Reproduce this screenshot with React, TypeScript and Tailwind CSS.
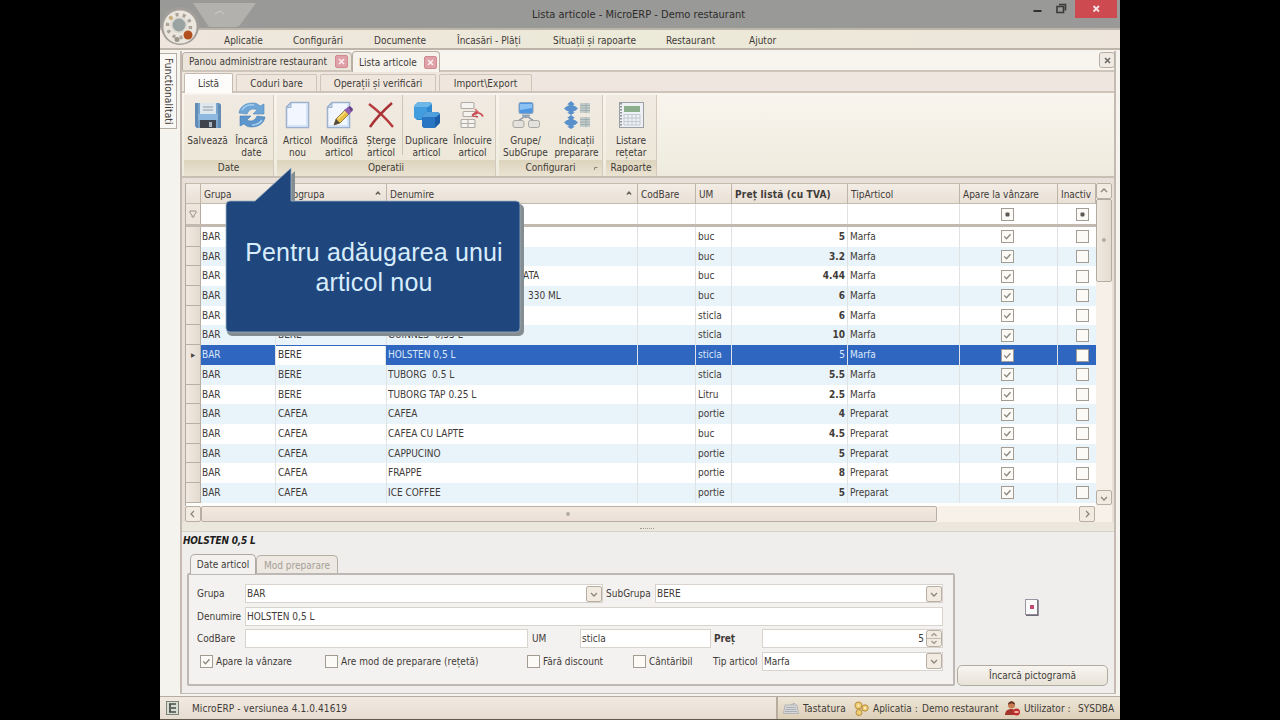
import React from "react";
import clsx from "clsx";

type Row = {
    grupa: string,
    subgrupa?: string,
    denumire?: string,
    um: string,
    pret: string,
    tip: string,
    indent?: string
}

const rows: Row[] = [
    { grupa: "BAR", um: "buc", pret: "5", tip: "Marfa" },
    { grupa: "BAR", um: "buc", pret: "3.2", tip: "Marfa" },
    { grupa: "BAR", denumire: "ATA", um: "buc", pret: "4.44", tip: "Marfa", indent: "pl-[136px]" },
    { grupa: "BAR", denumire: "330 ML", um: "buc", pret: "6", tip: "Marfa", indent: "pl-[141px]" },
    { grupa: "BAR", um: "sticla", pret: "6", tip: "Marfa" },
    { grupa: "BAR", subgrupa: "BERE", denumire: "GUINNES  0,33 L", um: "sticla", pret: "10", tip: "Marfa" },
    { grupa: "BAR", subgrupa: "BERE", denumire: "HOLSTEN 0,5 L", um: "sticla", pret: "5", tip: "Marfa" },
    { grupa: "BAR", subgrupa: "BERE", denumire: "TUBORG  0.5 L", um: "sticla", pret: "5.5", tip: "Marfa" },
    { grupa: "BAR", subgrupa: "BERE", denumire: "TUBORG TAP 0.25 L", um: "Litru", pret: "2.5", tip: "Marfa" },
    { grupa: "BAR", subgrupa: "CAFEA", denumire: "CAFEA", um: "portie", pret: "4", tip: "Preparat" },
    { grupa: "BAR", subgrupa: "CAFEA", denumire: "CAFEA CU LAPTE", um: "buc", pret: "4.5", tip: "Preparat" },
    { grupa: "BAR", subgrupa: "CAFEA", denumire: "CAPPUCINO", um: "portie", pret: "5", tip: "Preparat" },
    { grupa: "BAR", subgrupa: "CAFEA", denumire: "FRAPPE", um: "portie", pret: "8", tip: "Preparat" },
    { grupa: "BAR", subgrupa: "CAFEA", denumire: "ICE COFFEE", um: "portie", pret: "5", tip: "Preparat" },
]

const selected = 6

const cols = "grid grid-cols-[15px_75px_111px_251px_58px_36px_116px_112px_98px_38px]"

function Check({ on, dot, className }: { on?: boolean, dot?: boolean, className?: string }) {
    return (
        <svg className={clsx("h-[13px] w-[13px] shrink-0", className)} viewBox="0 0 13 13">
            <rect x="0.5" y="0.5" width="12" height="12" fill="#fbfaf6" stroke="#a39c93" />
            {on && <path d="M3.2 6.4l2.3 2.4 4-4.6" fill="none" stroke="#8a847c" strokeWidth="1.3" />}
            {dot && <rect x="4.500" y="4.500" width="4" height="4" rx="1" fill="#5c5852" />}
        </svg>
    )
}

function Arrow({ dir, className }: { dir: "up" | "down" | "left" | "right", className?: string }) {
    const d = {
        up: "M2 6l3-3 3 3",
        down: "M2 4l3 3 3-3",
        left: "M6 2L3 5l3 3",
        right: "M4 2l3 3-3 3",
    }[dir]
    return (
        <span className={clsx("flex shrink-0 items-center justify-center rounded-[2px] border border-[#b8aea3] bg-[#f1ebe2]", className)}>
            <svg className="h-[10px] w-[10px]" viewBox="0 0 10 10">
                <path d={d} fill="none" stroke="#8d857d" strokeWidth="1.3" />
            </svg>
        </span>
    )
}

function CloseMark() {
    return (
        <svg className="h-[13px] w-[13px] shrink-0" viewBox="0 0 13 13">
            <rect x="0.5" y="0.5" width="12" height="12" rx="1.5" fill="#e0a0a7" stroke="#cf8991" />
            <path d="M4 4l5 5M9 4l-5 5" stroke="#fbeef0" strokeWidth="1.6" />
        </svg>
    )
}

function SortMark() {
    return (
        <svg className="mt-[7px] h-[5px] w-[6px] shrink-0" viewBox="0 0 6 5">
            <path d="M0.800 3.500L3 1l2.200 2.500" fill="none" stroke="#69635c" strokeWidth="1.2" />
        </svg>
    )
}

/* ---------- ribbon icons, all on a 28x28 canvas ---------- */

function SaveIcon() {
    return (
        <svg className="h-7 w-7" viewBox="0 0 28 28">
            <path d="M1 2h24l2 2v23H3l-2-2z" fill="#7ba6cc" />
            <path d="M1 2h3v25H3l-2-2zM24 2h1l2 2v23h-3z" fill="#628bb5" />
            <rect x="6" y="2" width="16" height="11" fill="#dfe7ee" />
            <path d="M9 6h10M9 9h10" stroke="#a9b5c0" strokeWidth="1.4" />
            <rect x="4" y="13" width="20" height="6" fill="#8cb9dd" />
            <rect x="6" y="19" width="16" height="8" fill="#3f444d" />
            <rect x="15" y="21" width="3" height="5" fill="#a7b3bf" />
        </svg>
    )
}

function RefreshIcon() {
    return (
        <svg className="h-7 w-7" viewBox="0 0 28 28">
            <path d="M1 12C2 5 8 2 15 2c3 0 5 1 7 3l4-2v10H15l4-4c-4-2-8-1-10 4z" fill="#6fa6d6" stroke="#5089bd" strokeWidth="0.6" />
            <path d="M27 16c-1 7-7 10-14 10-3 0-5-1-7-3l-4 2V15h11l-4 4c4 2 8 1 10-4z" fill="#5c96cc" stroke="#4a80b5" strokeWidth="0.6" />
            <path d="M4 9c2-4 7-6 12-5M24 19c-2 3-6 5-10 5" fill="none" stroke="#a8d0ee" strokeWidth="1.4" />
        </svg>
    )
}

function Page() {
    return (
        <>
            <path d="M7 1.5h17.5v25h-22V6z" fill="#f1f6ff" stroke="#9db1ce" strokeWidth="1.5" />
            <path d="M2.5 6.5H7V2z" fill="#c5d7ee" stroke="#9db1ce" />
            <path d="M23 3v22H4" fill="none" stroke="#cddff5" strokeWidth="1.6" />
        </>
    )
}

function PageIcon() {
    return <svg className="h-7 w-7" viewBox="0 0 28 28"><Page /></svg>
}

function EditIcon() {
    return (
        <svg className="h-7 w-7" viewBox="0 0 28 28">
            <Page />
            <path d="M9 24l2-6L21 8l4 4-10 10z" fill="#e9bf3f" stroke="#7c6836" strokeWidth="0.8" />
            <path d="M9 24l2-6 4 4z" fill="#514a42" />
            <path d="M13 18l9-9" stroke="#f8df83" strokeWidth="1.6" />
            <path d="M19 9l4-3 4 4-3 4z" fill="#8d5fae" />
            <path d="M23 6l2-1 3 3-1 3z" fill="#653e8a" />
        </svg>
    )
}

function DeleteIcon() {
    return (
        <svg className="h-7 w-7" viewBox="0 0 28 28">
            <path d="M2 3c8 6 16 13 24 23" fill="none" stroke="#b53a3c" strokeWidth="2.4" />
            <path d="M25 2C16 10 9 17 3 26" fill="none" stroke="#a83134" strokeWidth="2.4" />
        </svg>
    )
}

function DuplicateIcon() {
    return (
        <svg className="h-7 w-7" viewBox="0 0 28 28">
            <path d="M1 5l4-4h12l2 2v11l-5 5H4l-3-3z" fill="#2d88cf" />
            <path d="M1 5l4-4h12l2 2-4 3H1z" fill="#6db7e8" />
            <path d="M1 6h13v12H4l-3-2z" fill="#429dde" />
            <path d="M9 15l4-4h12l2 2v9l-5 5H11l-2-2z" fill="#1c5da8" />
            <path d="M9 15l4-4h12l2 2-4 3H9z" fill="#4f9fdd" />
            <path d="M9 16h13v11H11l-2-2z" fill="#2876c3" />
        </svg>
    )
}

function ReplaceIcon() {
    return (
        <svg className="h-7 w-7" viewBox="0 0 28 28">
            <g fill="#f5f3f0" stroke="#b0aba7" strokeWidth="1.1">
                <rect x="2" y="1.500" width="13" height="6" rx="1" />
                <rect x="4" y="10.500" width="13" height="5" rx="1" />
                <rect x="2" y="18.500" width="14" height="8" rx="1" />
                <path d="M2 22.500h14M9 18.500v8" />
            </g>
            <path d="M13 14.500l5-4M13 14.500l6 1.500M14 14.500c4-4 8-3 10 1" fill="none" stroke="#cb4a51" strokeWidth="1.700" />
            <path d="M16 8l4 4" stroke="#d5656b" strokeWidth="1.4" />
        </svg>
    )
}

function GroupsIcon() {
    return (
        <svg className="h-7 w-7" viewBox="0 0 28 28">
            <path d="M14 14v3M6 20l6-4h4l6 4" fill="none" stroke="#8b95a1" strokeWidth="1.5" />
            <rect x="7" y="1.500" width="14" height="11" rx="1.5" fill="#4e96df" stroke="#8ba3be" />
            <path d="M8 3h12v4L8 9z" fill="#8cc1f4" />
            <path d="M10 14.500h8" stroke="#8ea5bd" strokeWidth="2" />
            <rect x="1" y="19.500" width="11" height="7" rx="2" fill="#e2e1dc" stroke="#a8a7a1" />
            <rect x="16.500" y="19.500" width="11" height="7" rx="2" fill="#e2e1dc" stroke="#a8a7a1" />
        </svg>
    )
}

function HintsIcon() {
    return (
        <svg className="h-7 w-7" viewBox="0 0 28 28">
            <g fill="#5a90cb">
                <path d="M8 0l4 3.500h-1.500V5H12l3 2.500-3 2.500h-1.500v1.500H12L8 14l-4-2.500h1.500V10H4L1 7.500 4 5h1.500V3.500H4z" />
                <path d="M8 14l4 3h-1.500v2H12l3 2.500-3 2.500h-1.500v1.500H12L8 28l-4-2.500h1.500V24H4l-3-2.500L4 19h1.500v-2H4z" />
            </g>
            <g fill="#c3cccb">
                <rect x="17" y="2" width="10" height="10" />
                <rect x="17" y="16" width="10" height="10" />
            </g>
            <path d="M17 4.500h10M17 7h10M17 9.500h10M17 18.500h10M17 21h10M17 23.500h10M23 2v10M23 16v10" stroke="#9eabad" strokeWidth="0.9" />
        </svg>
    )
}

function ReportIcon() {
    return (
        <svg className="h-7 w-7" viewBox="0 0 28 28">
            <rect x="2.500" y="1.500" width="24" height="25" fill="#eef0f3" stroke="#9a9fa6" />
            <path d="M4 2v24" stroke="#8e939b" strokeWidth="2" strokeDasharray="1.500 1.500" />
            <rect x="7" y="5" width="16" height="6" fill="#8bae8c" />
            <path d="M7 13.500h16M7 17h16M7 20.500h16M7 24h16M11 13v11M15 13v11M19 13v11M23 13v11M7 13v11" stroke="#bcc5d2" strokeWidth="0.9" />
        </svg>
    )
}

function RibbonButton({ icon, top, bottom, className }: { icon: React.ReactNode, top: string, bottom?: string, className?: string }) {
    return (
        <div className={clsx("flex shrink-0 flex-col items-center whitespace-nowrap pt-[6px] text-center leading-[12px]", className)}>
            {icon}
            <span className="mt-[6px]">{top}</span>
            <span>{bottom}</span>
        </div>
    )
}

function RibbonGroup({ title, className, more, children }: { title: string, className?: string, more?: boolean, children: React.ReactNode }) {
    return (
        <div className={clsx("flex h-[81px] shrink-0 flex-col border-r border-[#d3cabd] bg-[#f1ece1]", className)}>
            <div className="flex h-[65px] justify-center bg-linear-to-b from-[#f0eae2] to-[#ede8d9]">{children}</div>
            <div className="relative h-[16px] bg-linear-to-b from-[#ddd4bd] to-[#ebe3d2] text-center leading-[16px]">
                {title}
                {more && (
                    <svg className="absolute right-[4px] bottom-[5px] h-[4px] w-[4px]" viewBox="0 0 4 4"><path d="M0.500 3V0.500H3.500" fill="none" stroke="#8b8376" /></svg>
                )}
            </div>
        </div>
    )
}

function TitleBar() {
    return (
        <div className="relative flex h-[28px] bg-[#999998]">
            <svg className="h-[28px] w-[96px]" viewBox="0 0 96 28">
                <path d="M33 3h63L80 25q-2 2-5 2H49z" fill="#b3b1ae" />
                <path d="M55 14l5-3 4 3" fill="none" stroke="#d0cecb" />
            </svg>
            <span className="ml-[276px] pt-[1px] text-[11px] leading-[28px] text-[#2e2c2a]">Lista articole - MicroERP - Demo restaurant</span>
            <svg className="ml-auto h-[18px] w-[94px]" viewBox="0 0 94 18">
                <rect x="7.500" y="10" width="8" height="2" fill="#30302f" />
                <path d="M33 4.500h6.500v6M31 6.500h6.500v6H31z" fill="none" stroke="#3b3a39" strokeWidth="1.6" />
                <rect x="49" y="0" width="42" height="18" fill="#cc4a50" />
                <path d="M67.500 6l5.500 5.500M73 6l-5.500 5.500" stroke="#f7e3e3" strokeWidth="1.8" />
            </svg>
            {/* application button, hangs over the menu */}
            <svg className="absolute top-[7px] left-0 z-10 h-[39px] w-[41px]" viewBox="0 0 41 39">
                <circle cx="20" cy="19" r="19" fill="#a19e99" />
                <circle cx="20" cy="20" r="17" fill="#ebe6de" stroke="#a29b92" strokeWidth="0.8" />
                <circle cx="19" cy="19" r="11.500" fill="none" stroke="#aaa49b" strokeWidth="3.500" strokeDasharray="3 4.200" />
                <circle cx="19" cy="18" r="7.500" fill="#99a3a1" stroke="#dedad3" strokeWidth="2" />
                <circle cx="28" cy="28" r="4.500" fill="#b1501e" />
                <circle cx="11" cy="11" r="2" fill="#cbb07c" />
                <circle cx="17" cy="32.500" r="2.500" fill="#9a968b" />
            </svg>
        </div>
    )
}

function MenuBar() {
    return (
        <div className="flex h-[22px] border-y-2 border-[#bdb5a9] bg-linear-to-r from-[#efe6dd] via-[#ecead9] to-[#eee6dc] pl-[64px] leading-[21px] whitespace-nowrap">
            <span className="w-[69px]">Aplicatie</span>
            <span className="w-[81px]">Configurări</span>
            <span className="w-[83px]">Documente</span>
            <span className="w-[96px]">Încasări - Plăți</span>
            <span className="w-[113px]">Situații și rapoarte</span>
            <span className="w-[83px]">Restaurant</span>
            <span>Ajutor</span>
        </div>
    )
}

function DocumentTabs() {
    return (
        <div className="flex h-[21px] shrink-0 items-end border-b-2 border-[#cdc4ba] bg-[#f8f4ee]">
            <div className="flex h-[18px] w-[170px] items-center justify-between rounded-t-[4px] border border-b-0 border-[#b9aea5] bg-[#ece5dc] pr-[3px] pl-[6px] whitespace-nowrap">
                <span className="tracking-[0.03px]">Panou administrare restaurant</span>
                <CloseMark />
            </div>
            <div className="-mb-[2px] flex h-[21px] w-[88px] items-center justify-between rounded-t-[4px] border border-b-0 border-[#b9aea5] bg-[#f6f2ec] pr-[2px] pl-[6px] whitespace-nowrap">
                <span>Lista articole</span>
                <CloseMark />
            </div>
            <span className="mr-[-1px] mb-[2px] ml-auto flex h-[16px] w-[16px] items-center justify-center rounded-[3px] border border-[#b6aea4] bg-[#efebe2]">
                <svg className="h-[7px] w-[7px]" viewBox="0 0 7 7"><path d="M1 1l5 5M6 1L1 6" stroke="#6f6a65" strokeWidth="1.6" /></svg>
            </span>
        </div>
    )
}

function Ribbon() {
    const tab = "h-[17px] rounded-t-[2px] border border-b-0 border-[#cec4b8] bg-[#efe7de] text-center leading-[17px]"
    return (
        <>
            <div className="flex h-[21px] shrink-0 items-end gap-[3px] border-b-2 border-[#cec4b9] bg-[#efe7df] pl-[2px] whitespace-nowrap">
                <div className="-mb-[2px] h-[20px] w-[49px] rounded-t-[2px] border border-b-0 border-[#c4bab0] bg-[#fdfcfb] text-center leading-[19px]">Listă</div>
                <div className={clsx(tab, "w-[81px]")}>Coduri bare</div>
                <div className={clsx(tab, "w-[116px]")}>Operații și verificări</div>
                <div className={clsx(tab, "w-[93px] tracking-[0.1px]")}>Import\Export</div>
            </div>
            <div className="flex h-[85px] shrink-0 gap-[3px] border-b-2 border-[#c9beb3] bg-linear-to-b from-[#f9f5ee] to-[#eeebde] pt-[2px] pl-[2px]">
                <RibbonGroup title="Date" className="w-[90px]">
                    <RibbonButton icon={<SaveIcon />} top="Salvează" className="w-[46px]" />
                    <RibbonButton icon={<RefreshIcon />} top="Încarcă" bottom="date" className="w-[42px]" />
                </RibbonGroup>
                <RibbonGroup title="Operatii" className="w-[219px]">
                    <RibbonButton icon={<PageIcon />} top="Articol" bottom="nou" className="w-[41px]" />
                    <RibbonButton icon={<EditIcon />} top="Modifică" bottom="articol" className="w-[42px]" />
                    <RibbonButton icon={<DeleteIcon />} top="Șterge" bottom="articol" className="w-[42px]" />
                    <div className="h-[60px] w-px bg-[#cdc4b8]" />
                    <RibbonButton icon={<DuplicateIcon />} top="Duplicare" bottom="articol" className="w-[47px]" />
                    <RibbonButton icon={<ReplaceIcon />} top="Înlocuire" bottom="articol" className="w-[45px]" />
                </RibbonGroup>
                <RibbonGroup title="Configurari" className="w-[104px]" more>
                    <RibbonButton icon={<GroupsIcon />} top="Grupe/" bottom="SubGrupe" className="w-[52px]" />
                    <RibbonButton icon={<HintsIcon />} top="Indicații" bottom="preparare" className="w-[50px]" />
                </RibbonGroup>
                <RibbonGroup title="Rapoarte" className="w-[51px]">
                    <RibbonButton icon={<ReportIcon />} top="Listare" bottom="rețetar" className="w-[50px]" />
                </RibbonGroup>
            </div>
        </>
    )
}

function ArticleTable() {
    const head = "overflow-hidden border-r border-[#beb4a8] pl-[3px]"
    const body = "overflow-hidden border-r border-[#dfe3e6] whitespace-pre"
    return (
        <div className="mt-[5px] ml-[3px] flex h-[323px] w-[927px] shrink-0">
            <div className="flex w-[911px] shrink-0 flex-col overflow-hidden border-l border-[#b5aba1] bg-white">
                <div className={clsx(cols, "h-[21px] shrink-0 border-y border-[#c4baae] bg-linear-to-b from-[#f3ede5] to-[#e9e0d6] leading-[21px] whitespace-nowrap")}>
                    <div className={head} />
                    <div className={head}>Grupa</div>
                    <div className={clsx(head, "flex justify-between pr-[5px]")}><span className="pl-[2px]">Subgrupa</span><SortMark /></div>
                    <div className={clsx(head, "flex justify-between pr-[5px]")}><span>Denumire</span><SortMark /></div>
                    <div className={head}>CodBare</div>
                    <div className={head}>UM</div>
                    <div className={clsx(head, "font-bold tracking-[0.2px]")}>Preț listă (cu TVA)</div>
                    <div className={head}>TipArticol</div>
                    <div className={head}>Apare la vânzare</div>
                    <div className={head}>Inactiv</div>
                </div>
                <div className={clsx(cols, "h-[23px] shrink-0 border-b-[3px] border-[#c2bab1]")}>
                    <div className="flex items-center justify-center border-r border-[#b5aba1] bg-[#eee6dd]">
                        <svg className="h-[8px] w-[8px]" viewBox="0 0 8 8"><path d="M1 1h6v2L5 5v2H3V5L1 3z" fill="none" stroke="#9c948b" /></svg>
                    </div>
                    <div className={body} />
                    <div className={body} />
                    <div className={body} />
                    <div className={body} />
                    <div className={body} />
                    <div className={body} />
                    <div className={body} />
                    <div className={clsx(body, "flex items-center justify-center pr-[2px]")}><Check dot /></div>
                    <div className="flex items-center pl-[18px]"><Check dot /></div>
                </div>
                {rows.map((r, i) => {
                    const sel = i === selected
                    return (
                        <div
                            key={i}
                            className={clsx(cols, "h-[19.7px] shrink-0 leading-[20px]", sel ? "bg-[#2f66bf] text-[#dbe7fa]" : i % 2 ? "bg-[#e9f3fa]" : "bg-white")}
                        >
                            <div className="flex items-center justify-center border-r border-b border-[#b9afa5] bg-linear-to-r from-[#f1eae2] to-[#e4dacf] text-[6px] text-[#4d4843]">{sel && "▶"}</div>
                            <div className={clsx(body, "pl-px")}>{r.grupa}</div>
                            <div className={clsx(body, "pl-[2px]", sel && "m-px ml-0 bg-white leading-[18px] text-[#353433]")}>{r.subgrupa}</div>
                            <div className={clsx(body, r.indent ?? "pl-px")}>{r.denumire}</div>
                            <div className={body} />
                            <div className={clsx(body, "pl-[2px]")}>{r.um}</div>
                            <div className={clsx(body, "pr-[2px] text-right", sel ? "" : "font-bold")}>{r.pret}</div>
                            <div className={clsx(body, "pl-[2px]")}>{r.tip}</div>
                            <div className={clsx(body, "flex items-center justify-center pr-[2px]")}><Check on /></div>
                            <div className="flex items-center pl-[18px]"><Check /></div>
                        </div>
                    )
                })}
                <div className="h-[4px] shrink-0 bg-[#fdfdfc]" />
            </div>
            <div className="flex w-[16px] flex-col bg-[#f6f0e8]">
                <Arrow dir="up" className="h-[16px]" />
                <div className="flex h-[83px] items-center justify-center rounded-[2px] border border-[#b5aba0] bg-linear-to-r from-[#f0e9df] to-[#e5dcd1]">
                    <span className="mb-px h-[4px] w-[4px] rounded-full bg-[#b3aca4]" />
                </div>
                <Arrow dir="down" className="mt-auto mb-[1px] h-[15px]" />
            </div>
        </div>
    )
}

function HorizontalScroll() {
    return (
        <div className="ml-[3px] flex h-[16px] w-[927px] shrink-0 bg-[#f7f1ea]">
            <Arrow dir="left" className="w-[16px]" />
            <div className="flex w-[736px] items-center justify-center rounded-[2px] border border-[#b9aea4] bg-linear-to-b from-[#f3e9e1] to-[#ebdfd6]">
                <span className="mr-[3px] h-[4px] w-[4px] rounded-full bg-[#b3aca4]" />
            </div>
            <Arrow dir="right" className="mr-[17px] ml-auto w-[16px]" />
        </div>
    )
}

function Field({ value, combo, spin, className }: { value?: string, combo?: boolean, spin?: boolean, className?: string }) {
    return (
        <div className={clsx("flex h-[19px] shrink-0 items-center border border-[#d8d3cd] bg-white pl-px leading-[17px]", className)}>
            <span className={clsx(spin && "ml-auto pr-[2px]")}>{value}</span>
            {combo && <Arrow dir="down" className="ml-auto h-[16px] w-[16px]" />}
            {spin && (
                <svg className="h-[17px] w-[16px] shrink-0" viewBox="0 0 16 17">
                    <rect x="0.5" y="0.5" width="15" height="16" rx="2" fill="#f1ebe2" stroke="#b8aea3" />
                    <path d="M1 8.500h14" stroke="#c4bbb1" />
                    <path d="M5.500 6L8 3.500 10.500 6M5.500 11L8 13.500l2.500-2.500" fill="none" stroke="#9c948b" strokeWidth="1.2" />
                </svg>
            )}
        </div>
    )
}

function DetailPanel() {
    return (
        <div className="flex h-[162px] shrink-0 border-t border-[#d5d2c6] bg-[#efeeed]">
            <div className="flex w-[773px] shrink-0 flex-col pl-[5px]">
                <div className="-ml-[4px] h-[22px] leading-[18px] font-bold tracking-[-0.2px] text-[#1e1d1c] italic">HOLSTEN 0,5 L</div>
                <div className="relative z-10 -mb-px flex h-[20px] items-end pl-[3px]">
                    <div className="h-[20px] w-[66px] rounded-t-[5px] border-[1.500px] border-b-0 border-[#b0a9a3] bg-[#f4f2f0] text-center leading-[20px] whitespace-nowrap">Date articol</div>
                    <div className="mb-px h-[18px] w-[82px] rounded-t-[5px] border border-b-0 border-[#b5aea5] bg-[#ede8e1] text-center leading-[19px] whitespace-nowrap text-[#a5a099]">Mod preparare</div>
                </div>
                <div className="flex h-[113px] flex-col gap-[3.500px] rounded-[2px] border-2 border-[#bdb8b3] bg-[#f4f2f0] pt-[9px] pl-[8px] whitespace-nowrap">
                    <div className="flex items-center">
                        <span className="w-[48px]">Grupa</span>
                        <Field value="BAR" combo className="w-[358px]" />
                        <span className="w-[52px] pl-[3px]">SubGrupa</span>
                        <Field value="BERE" combo className="w-[288px]" />
                    </div>
                    <div className="flex items-center">
                        <span className="w-[48px]">Denumire</span>
                        <Field value="HOLSTEN 0,5 L" className="w-[698px]" />
                    </div>
                    <div className="flex items-center">
                        <span className="w-[48px]">CodBare</span>
                        <Field className="w-[283px]" />
                        <span className="w-[52px] pl-[4px]">UM</span>
                        <Field value="sticla" className="w-[131px]" />
                        <span className="w-[51px] pl-[3px] font-bold tracking-[-0.1px]">Preț</span>
                        <Field value="5" spin className="w-[181px]" />
                    </div>
                    <div className="flex items-center">
                        <Check on className="ml-[3px]" />
                        <span className="w-[112px] pl-[3px]">Apare la vânzare</span>
                        <Check />
                        <span className="w-[189px] pl-[3px] tracking-[0.05px]">Are mod de preparare (rețetă)</span>
                        <Check />
                        <span className="w-[93px] pl-[3px]">Fără discount</span>
                        <Check />
                        <span className="w-[67px] pl-[3px]">Cântăribil</span>
                        <span className="w-[49px]">Tip articol</span>
                        <Field value="Marfa" combo className="w-[181px]" />
                    </div>
                </div>
            </div>
            <div className="flex flex-1 flex-col items-center">
                <svg className="mt-[67px] mr-[5px] h-[17px] w-[14px]" viewBox="0 0 14 17">
                    <rect x="0.5" y="0.5" width="12" height="15" fill="#fbfafb" stroke="#9a94a3" />
                    <path d="M13 1v15.500H1" fill="none" stroke="#6f6a78" strokeWidth="1.4" />
                    <rect x="5" y="6" width="4" height="4" fill="#c9476a" />
                </svg>
                <div className="mt-[49px] mr-[4px] h-[21px] w-[151px] rounded-[5px] border border-[#b1aa9f] bg-linear-to-b from-[#f8f5f0] to-[#e8e3d8] text-center leading-[20px]">Încarcă pictogramă</div>
            </div>
        </div>
    )
}

function StatusBar() {
    return (
        <div className="flex h-[23px] shrink-0 items-center border-t border-[#b5aca2] bg-linear-to-b from-[#f1e9e1] to-[#e7dcd2] pl-[6px] whitespace-nowrap">
            <svg className="h-[14px] w-[13px]" viewBox="0 0 13 14">
                <rect x="0.5" y="0.5" width="12" height="13" fill="#d9dcd0" stroke="#7c8378" />
                <path d="M3 3h7M5 7h5M3 11h7M4 3v8" fill="none" stroke="#474d48" strokeWidth="1.7" />
            </svg>
            <span className="ml-[13px] tracking-[0.1px]">MicroERP - versiunea 4.1.0.41619</span>
            <div className="ml-auto flex h-full w-[344px] items-center border-l-2 border-[#b7ac9e] bg-linear-to-b from-[#ede5d7] to-[#ddd0b8] pl-[5px]">
                <svg className="h-[13px] w-[16px]" viewBox="0 0 16 13">
                    <path d="M2 3h12l1.500 8.500H.5z" fill="#d6d8d9" stroke="#b3b5b5" />
                    <path d="M3 5.500h10M2.500 7.500h11M2 9.500h12M8 3c0-2 3 0 4-2" fill="none" stroke="#a9afb3" />
                </svg>
                <span className="w-[55px] pl-[4px] tracking-[0.15px]">Tastatura</span>
                <svg className="h-[15px] w-[15px]" viewBox="0 0 15 15">
                    <g fill="#f0cd75" stroke="#b58a3c">
                        <circle cx="4.500" cy="4.500" r="3.500" />
                        <circle cx="11" cy="7" r="3.200" />
                        <circle cx="5" cy="11.500" r="3" />
                    </g>
                    <circle cx="4.500" cy="4.500" r="1" fill="#fff4d4" />
                    <circle cx="11" cy="7" r="1" fill="#fff4d4" />
                </svg>
                <span className="w-[53px] pl-[4px]">Aplicatia :</span>
                <span className="w-[83px]">Demo restaurant</span>
                <svg className="h-[15px] w-[16px]" viewBox="0 0 16 15">
                    <circle cx="6.500" cy="4" r="3.500" fill="#c97c51" />
                    <path d="M3 4c0-5 7-5 7 0-2-2-5-2-7 0z" fill="#643626" />
                    <path d="M0 14c0-8 12-8 12 0z" fill="#a3352c" />
                    <circle cx="11.500" cy="11" r="3.500" fill="#c22f2b" />
                    <path d="M9.500 11h4" stroke="#f4dfd7" strokeWidth="1.5" />
                </svg>
                <span className="w-[57px] pl-[3px]">Utilizator :</span>
                <span>SYSDBA</span>
            </div>
        </div>
    )
}

function Callout() {
    return (
        <div className="absolute top-[167px] left-[225px] z-20 h-[170px] w-[300px]">
            <svg className="absolute inset-0 h-[170px] w-[300px]" viewBox="0 0 300 170">
                <path d="M5 37H34L70 4V37H294a5 5 0 015 5V164a5 5 0 01-5 5H7a5 5 0 01-5-5V42z" fill="#848d92" />
                <path d="M5 34H30L66 1V34H291a4 4 0 014 4V161a4 4 0 01-4 4H5a4 4 0 01-4-4V38a4 4 0 014-4z" fill="#1f477e" stroke="#9fb2c3" strokeWidth="0.8" />
            </svg>
            <div className="relative pt-[70px] pr-[2px] text-center font-['Liberation_Sans',sans-serif] text-[25px] leading-[30px] tracking-[0.15px] whitespace-nowrap text-[#d8edfc]">
                Pentru adăugarea unui<br />articol nou
            </div>
        </div>
    )
}

export default function App() {
    return (
        <div className="relative flex h-[720px] w-[1280px] justify-center overflow-hidden bg-black">
            <div className="flex w-[960px] flex-col bg-[#f5f3ee] font-['DejaVu_Sans_Condensed','DejaVu_Sans',sans-serif] text-[10px] text-[#3f3b38]">
                <TitleBar />
                <MenuBar />
                <div className="flex h-[646px] shrink-0">
                    <div className="w-[20px] shrink-0 pt-[3px]">
                        <div className="h-[76px] w-[17px] border border-l-0 border-[#b5aca3] bg-[#faf8f4] pt-[4px] pr-[1px] leading-[14px] tracking-[0.2px] [writing-mode:vertical-rl]">Functionalitati</div>
                    </div>
                    <div className="mt-[1px] flex h-[643px] w-[936px] shrink-0 flex-col border-x-2 border-b-2 border-[#c4bab1] bg-[#e8e0d8]">
                        <DocumentTabs />
                        <Ribbon />
                        <ArticleTable />
                        <HorizontalScroll />
                        <div className="flex h-[9px] shrink-0 items-end justify-center bg-[#ebe7dc]">
                            <span className="mr-[2px] mb-[2px] h-px w-[14px] border-t border-dotted border-[#a09a90]" />
                        </div>
                        <DetailPanel />
                    </div>
                </div>
                <StatusBar />
                <div className="h-[2px] bg-[#615a4c]" />
            </div>
            <Callout />
        </div>
    )
}
